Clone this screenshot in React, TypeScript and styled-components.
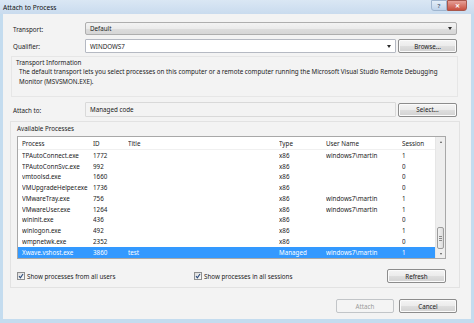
import styled, { createGlobalStyle } from "styled-components";

const GlobalStyle = createGlobalStyle`
  html, body {
    margin: 0;
    padding: 0;
    background: #c4dcef;
  }
  body {
    font-family: "Noto Sans", "Open Sans", sans-serif;
    font-size: 6.25px;
    color: #1a1a1a;
  }
`;

const PROCESSES = [
  { name: "TPAutoConnect.exe", id: "1772", title: "", type: "x86", user: "windows7\\martin", session: "1" },
  { name: "TPAutoConnSvc.exe", id: "992", title: "", type: "x86", user: "", session: "0" },
  { name: "vmtoolsd.exe", id: "1660", title: "", type: "x86", user: "", session: "0" },
  { name: "VMUpgradeHelper.exe", id: "1736", title: "", type: "x86", user: "", session: "0" },
  { name: "VMwareTray.exe", id: "756", title: "", type: "x86", user: "windows7\\martin", session: "1" },
  { name: "VMwareUser.exe", id: "1264", title: "", type: "x86", user: "windows7\\martin", session: "1" },
  { name: "wininit.exe", id: "436", title: "", type: "x86", user: "", session: "0" },
  { name: "winlogon.exe", id: "492", title: "", type: "x86", user: "", session: "1" },
  { name: "wmpnetwk.exe", id: "2352", title: "", type: "x86", user: "", session: "0" },
  { name: "Xwave.vshost.exe", id: "3860", title: "test", type: "Managed", user: "windows7\\martin", session: "1", selected: true },
];

const COLUMNS = "71px 35px 151px 47px 76px 1fr";

const Frame = styled.div`
  width: 474px;
  height: 323px;
  display: flex;
  flex-direction: column;
  background: #c4dcef;
  box-sizing: border-box;
`;

const TitleBar = styled.div`
  height: 14px;
  display: flex;
  align-items: center;
  padding: 0 7px 0 3px;
  background: linear-gradient(#dae7f4, #c9dbee);
  font-size: 6.6px;
  color: #111;
`;

const Caption = styled.span`
  flex: 1;
`;

const CaptionButton = styled.div<{ $close?: boolean }>`
  width: ${(p) => (p.$close ? 18 : 14)}px;
  height: 9px;
  margin-top: -3px;
  display: flex;
  align-items: center;
  justify-content: center;
  font-size: 6px;
  font-weight: bold;
  color: ${(p) => (p.$close ? "#fff" : "#5a6e88")};
  background: ${(p) => (p.$close ? "linear-gradient(#e6a097, #c9503f)" : "linear-gradient(#e4eef8, #bfd3ea)")};
  border: 1px solid ${(p) => (p.$close ? "#a8574c" : "#9fb5cf")};
  border-radius: ${(p) => (p.$close ? "0 0 3px 0" : "0 0 0 3px")};
`;

const Body = styled.div`
  flex: 1;
  margin: 0 3px 4px 3px;
  background: #f3f3f3;
  padding: 8px 14px 0 10px;
  display: flex;
  flex-direction: column;
`;

const FieldRow = styled.div<{ $top: number; $height: number }>`
  display: grid;
  grid-template-columns: 70px 1fr auto;
  column-gap: 2px;
  align-items: center;
  margin-top: ${(p) => p.$top}px;
  height: ${(p) => p.$height}px;
`;

const Label = styled.span`
  padding-top: 1px;
`;

const Field = styled.div<{ $variant: "combo" | "input" | "readonly" }>`
  height: 100%;
  box-sizing: border-box;
  display: flex;
  align-items: center;
  padding: 0 4px;
  border: 1px solid ${(p) => (p.$variant === "combo" ? "#aeaeae" : p.$variant === "input" ? "#b5b9c2" : "#d9d9d9")};
  border-radius: ${(p) => (p.$variant === "combo" ? "2px" : "1px")};
  background: ${(p) =>
    p.$variant === "combo"
      ? "linear-gradient(#f3f3f3 0%, #ebebeb 50%, #dddddd 51%, #d6d6d6 100%)"
      : p.$variant === "input"
        ? "#ffffff"
        : "#f3f3f3"};
  grid-column: ${(p) => (p.$variant === "combo" ? "2 / 4" : "2 / 3")};
`;

const FieldText = styled.span`
  flex: 1;
`;

const Arrow = styled.span`
  width: 0;
  height: 0;
  border-left: 2px solid transparent;
  border-right: 2px solid transparent;
  border-top: 3px solid #2b2b2b;
`;

const Button = styled.div<{ $width: number; $disabled?: boolean }>`
  width: ${(p) => p.$width}px;
  height: 14px;
  box-sizing: border-box;
  display: flex;
  align-items: center;
  justify-content: center;
  border: 1px solid ${(p) => (p.$disabled ? "#c2c5c8" : "#8c8c8c")};
  border-radius: 2px;
  background: ${(p) =>
    p.$disabled ? "#f4f4f4" : "linear-gradient(#f4f4f4 0%, #ebebeb 50%, #dedede 51%, #d2d2d2 100%)"};
  color: ${(p) => (p.$disabled ? "#9a9a9a" : "#1a1a1a")};
  box-shadow: ${(p) => (p.$disabled ? "none" : "inset 0 0 0 1px #fbfbfb")};
`;

const InfoPanel = styled.div`
  margin: 3px -1px 0 -2px;
  height: 41px;
  box-sizing: border-box;
  border: 1px solid #e6e6e6;
  padding: 1px 4px 0 4px;
  display: flex;
  flex-direction: column;
`;

const InfoTitle = styled.div`
  line-height: 9px;
`;

const InfoText = styled.div`
  padding-left: 3px;
  line-height: 10px;
  white-space: nowrap;
`;

const Group = styled.div`
  margin: 4px -3px 0 -3px;
  height: 167px;
  box-sizing: border-box;
  border: 1px solid #e2e2e2;
  padding: 1px 13px 0 6px;
  display: flex;
  flex-direction: column;
`;

const GroupTitle = styled.div`
  line-height: 11px;
`;

const ListBox = styled.div`
  margin-top: 2px;
  height: 123px;
  box-sizing: border-box;
  border: 1px solid #a8a8a8;
  background: #fff;
  display: flex;
  overflow: hidden;
`;

const ListRows = styled.div`
  flex: 1;
  display: flex;
  flex-direction: column;
`;

const HeaderRow = styled.div`
  display: grid;
  grid-template-columns: ${COLUMNS};
  height: 12px;
  align-items: center;
  padding-left: 4px;
  border-bottom: 1px solid #f0f0f0;
`;

const Row = styled.div<{ $selected?: boolean }>`
  display: grid;
  grid-template-columns: ${COLUMNS};
  height: 10.75px;
  align-items: center;
  padding-left: 4px;
  background: ${(p) => (p.$selected ? "#3399ff" : "transparent")};
  color: ${(p) => (p.$selected ? "#ffffff" : "#1a1a1a")};
  white-space: nowrap;
`;

const Cell = styled.span`
  overflow: hidden;
`;

const ScrollBar = styled.div`
  width: 9px;
  background: #eeeeee;
  border-left: 1px solid #e6e6e6;
  display: flex;
  flex-direction: column;
  align-items: center;
`;

const ScrollArrow = styled.div<{ $down?: boolean }>`
  height: 9px;
  display: flex;
  align-items: center;
  justify-content: center;
  &::after {
    content: "";
    border-left: 1.5px solid transparent;
    border-right: 1.5px solid transparent;
    ${(p) => (p.$down ? "border-top: 2px solid #555;" : "border-bottom: 2px solid #555;")}
  }
`;

const ScrollTrack = styled.div`
  flex: 1;
  width: 100%;
  display: flex;
  flex-direction: column;
  justify-content: flex-end;
  align-items: center;
`;

const Thumb = styled.div`
  width: 7px;
  height: 22px;
  box-sizing: border-box;
  border: 1px solid #9c9c9c;
  border-radius: 2px;
  background: linear-gradient(90deg, #f2f2f2, #dcdcdc);
  display: flex;
  flex-direction: column;
  align-items: center;
  justify-content: center;
  gap: 1px;
`;

const Grip = styled.span`
  width: 3px;
  height: 1px;
  background: #8a8a8a;
`;

const OptionsRow = styled.div`
  display: flex;
  align-items: center;
  margin-top: 10px;
  height: 14px;
`;

const CheckOption = styled.label<{ $width?: number }>`
  display: flex;
  align-items: center;
  gap: 2px;
  width: ${(p) => (p.$width ? `${p.$width}px` : "auto")};
  flex: ${(p) => (p.$width ? "none" : "1")};
`;

const CheckBox = styled.span`
  width: 8px;
  height: 8px;
  box-sizing: border-box;
  border: 1px solid #8e8f8f;
  background: linear-gradient(135deg, #dcdcdc, #fafafa);
  display: flex;
  align-items: center;
  justify-content: center;
`;

const Footer = styled.div`
  display: flex;
  justify-content: flex-end;
  gap: 5px;
  margin-top: 11px;
`;

const Check = () => (
  <CheckBox>
    <svg width="6" height="6" viewBox="0 0 6 6">
      <path d="M1 3.2 L2.4 4.8 L5 1" fill="none" stroke="#2a4a7a" strokeWidth="1.1" />
    </svg>
  </CheckBox>
);

const App = () => {
  return (
    <>
      <GlobalStyle />
      <Frame>
        <TitleBar>
          <Caption>Attach to Process</Caption>
          <CaptionButton>?</CaptionButton>
          <CaptionButton $close>✕</CaptionButton>
        </TitleBar>
        <Body>
          <FieldRow $top={0} $height={13}>
            <Label>Transport:</Label>
            <Field $variant="combo">
              <FieldText>Default</FieldText>
              <Arrow />
            </Field>
          </FieldRow>
          <FieldRow $top={4} $height={14}>
            <Label>Qualifier:</Label>
            <Field $variant="input">
              <FieldText>WINDOWS7</FieldText>
              <Arrow />
            </Field>
            <Button $width={59}>Browse...</Button>
          </FieldRow>
          <InfoPanel>
            <InfoTitle>Transport Information</InfoTitle>
            <InfoText>
              The default transport lets you select processes on this computer or a remote computer running the Microsoft Visual Studio Remote Debugging
              <br />
              Monitor (MSVSMON.EXE).
            </InfoText>
          </InfoPanel>
          <FieldRow $top={5} $height={15}>
            <Label>Attach to:</Label>
            <Field $variant="readonly">
              <FieldText>Managed code</FieldText>
            </Field>
            <Button $width={59}>Select...</Button>
          </FieldRow>
          <Group>
            <GroupTitle>Available Processes</GroupTitle>
            <ListBox>
              <ListRows>
                <HeaderRow>
                  <Cell>Process</Cell>
                  <Cell>ID</Cell>
                  <Cell>Title</Cell>
                  <Cell>Type</Cell>
                  <Cell>User Name</Cell>
                  <Cell>Session</Cell>
                </HeaderRow>
                {PROCESSES.map((p) => (
                  <Row key={p.name} $selected={p.selected}>
                    <Cell>{p.name}</Cell>
                    <Cell>{p.id}</Cell>
                    <Cell>{p.title}</Cell>
                    <Cell>{p.type}</Cell>
                    <Cell>{p.user}</Cell>
                    <Cell>{p.session}</Cell>
                  </Row>
                ))}
              </ListRows>
              <ScrollBar>
                <ScrollArrow />
                <ScrollTrack>
                  <Thumb>
                    <Grip />
                    <Grip />
                    <Grip />
                  </Thumb>
                </ScrollTrack>
                <ScrollArrow $down />
              </ScrollBar>
            </ListBox>
            <OptionsRow>
              <CheckOption $width={177}>
                <Check />
                Show processes from all users
              </CheckOption>
              <CheckOption>
                <Check />
                Show processes in all sessions
              </CheckOption>
              <Button $width={59}>Refresh</Button>
            </OptionsRow>
          </Group>
          <Footer>
            <Button $width={58} $disabled>
              Attach
            </Button>
            <Button $width={58}>Cancel</Button>
          </Footer>
        </Body>
      </Frame>
    </>
  );
};

export default App;
